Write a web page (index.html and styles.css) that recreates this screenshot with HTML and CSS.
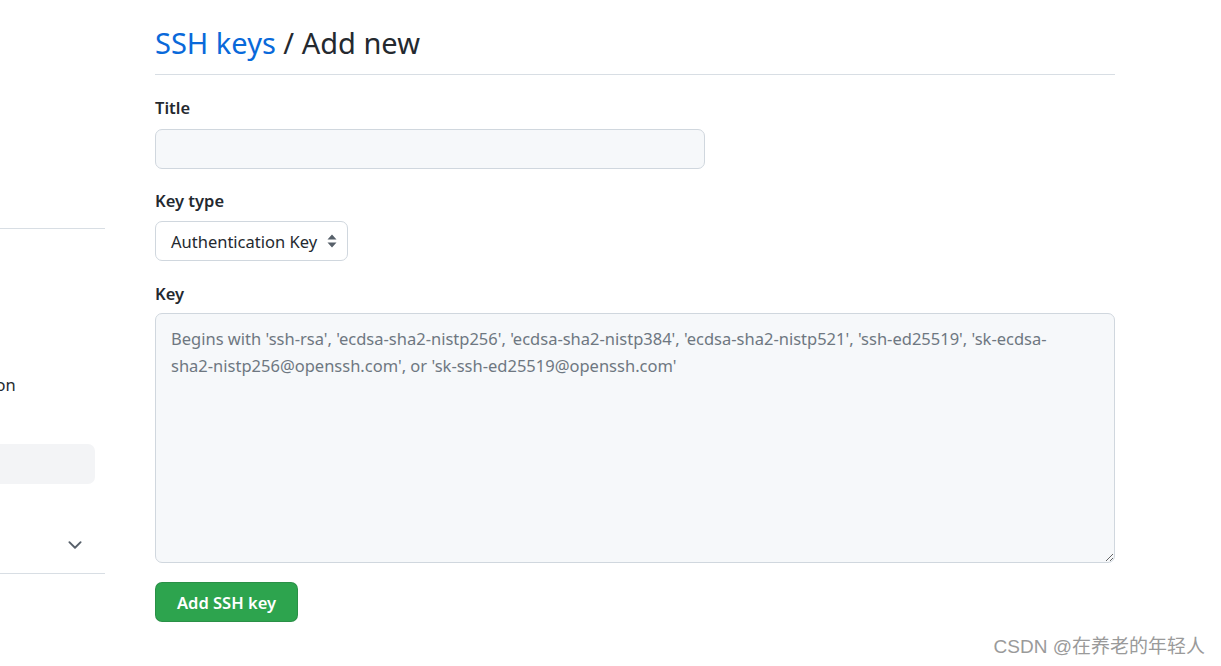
FILE: index.html
```html
<!DOCTYPE html>
<html lang="en">
<head>
<meta charset="utf-8">
<title>SSH keys / Add new</title>
<link rel="stylesheet" href="styles.css">
</head>
<body>
<div class="layout">
  <aside class="sidebar">
    <div class="side-inner">
      <div class="side-top"></div>
      <ul class="side-list">
        <li class="side-item"><span class="side-icon"></span></li>
        <li class="side-item"><span class="side-icon"></span><span>Password and authentication</span></li>
        <li class="side-item"><span class="side-icon"></span></li>
        <li class="side-item current"><span class="side-icon"></span></li>
        <li class="side-item"><span class="side-icon"></span></li>
        <li class="side-item"><span class="side-icon"></span>
          <svg class="chev" width="20" height="20" viewBox="0 0 16 16"><path d="M3.5 6.5l4.5 4.5L12.5 6.5" fill="none" stroke="#57606a" stroke-width="1.5" stroke-linecap="round" stroke-linejoin="round"/></svg>
        </li>
      </ul>
    </div>
  </aside>
  <main class="main">
    <div class="subhead">
      <h2 class="subhead-heading"><a href="#" class="link">SSH keys</a> / Add new</h2>
    </div>
    <form class="form">
      <div class="group group-title">
        <label class="label label-title">Title</label>
        <input class="input title-input" type="text">
      </div>
      <div class="group">
        <label class="label">Key type</label>
        <div class="select">
          <span>Authentication Key</span>
          <svg width="12" height="18" viewBox="0 0 12 18"><path d="M6 2.5L10.5 7.5H1.5Z M6 15.5L1.5 10.5H10.5Z" fill="#57606a"/></svg>
        </div>
      </div>
      <div class="group">
        <label class="label label-key">Key</label>
        <textarea class="input key-area" placeholder="Begins with 'ssh-rsa', 'ecdsa-sha2-nistp256', 'ecdsa-sha2-nistp384', 'ecdsa-sha2-nistp521', 'ssh-ed25519', 'sk-ecdsa-sha2-nistp256@openssh.com', or 'sk-ssh-ed25519@openssh.com'"></textarea>
      </div>
      <button type="button" class="btn">Add SSH key</button>
    </form>
  </main>
</div>
<div class="watermark">CSDN @在养老的年轻人</div>
</body>
</html>
```

FILE: styles.css
```css
html, body {
  margin: 0;
  padding: 0;
  background: #ffffff;
}
body {
  font-family: "Noto Sans", "Open Sans", sans-serif;
  font-size: 16.5px;
  color: #24292f;
  height: 666px;
  overflow: hidden;
  position: relative;
}
.layout {
  display: flex;
  align-items: flex-start;
}
.sidebar {
  width: 105px;
  flex: none;
  overflow: hidden;
}
.side-inner {
  width: 365px;
  margin-left: -260px;
}
.side-top {
  height: 228px;
  border-bottom: 1px solid #d8dee4;
}
.side-list {
  list-style: none;
  margin: 0;
  padding: 95px 0 9px;
  border-bottom: 1px solid #d8dee4;
}
.side-item {
  height: 40px;
  margin: 0 10px;
  padding: 0 10px;
  display: flex;
  align-items: center;
  gap: 10px;
  border-radius: 7px;
  white-space: nowrap;
  line-height: 25px;
}
.side-icon {
  width: 20px;
  height: 20px;
  flex: none;
}
.side-item.current {
  background: #f3f4f6;
}
.chev {
  margin-left: auto;
}
.main {
  width: 960px;
  margin-left: 50px;
  flex: none;
}
.subhead {
  margin-top: 20px;
  padding-bottom: 9px;
  border-bottom: 1px solid #d8dee4;
  margin-bottom: 20px;
}
.subhead-heading {
  margin: 0;
  font-size: 29px;
  font-weight: 400;
  line-height: 45px;
}
.link {
  color: #0969da;
  text-decoration: none;
}
.form {
  margin: 0;
}
.group {
  margin-bottom: 20px;
}
.group-title {
  margin-bottom: 19px;
}
.label {
  display: block;
  font-weight: 600;
  line-height: 25px;
  margin-bottom: 8px;
}
.label-title {
  margin-bottom: 9px;
}
.label-key {
  margin-bottom: 7px;
}
.input {
  display: block;
  box-sizing: border-box;
  font-family: inherit;
  font-size: 16.5px;
  color: #24292f;
  background: #f6f8fa;
  border: 1px solid #d0d7de;
  border-radius: 7px;
  outline: none;
}
.title-input {
  width: 550px;
  height: 40px;
  padding: 0 15px;
}
.select {
  display: inline-flex;
  align-items: center;
  box-sizing: border-box;
  height: 40px;
  padding: 0 9px 0 15px;
  gap: 9px;
  border: 1px solid #d0d7de;
  border-radius: 7px;
  background: #ffffff;
  line-height: 25px;
}
.key-area {
  width: 960px;
  height: 250px;
  padding: 11px 40px 11px 15px;
  line-height: 27px;
  resize: vertical;
}
.key-area::placeholder {
  color: #6e7781;
}
.btn {
  display: block;
  height: 40px;
  padding: 0 21px;
  font-family: inherit;
  font-size: 16.5px;
  font-weight: 600;
  color: #ffffff;
  background: #2da44e;
  border: 1px solid rgba(27, 31, 36, 0.15);
  border-radius: 7px;
  margin-top: -1px;
}
.watermark {
  position: absolute;
  right: 16px;
  bottom: 8px;
  font-family: "Liberation Sans", "Noto Sans CJK SC", sans-serif;
  font-size: 19px;
  color: #9a9a9a;
  text-shadow: 0 0 1px #ffffff;
}
```
